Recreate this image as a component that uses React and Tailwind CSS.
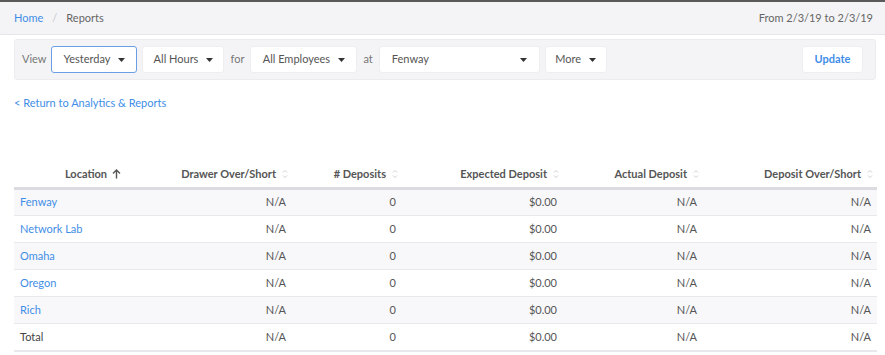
import React from 'react';

const rows = [
  { name: 'Fenway', link: true },
  { name: 'Network Lab', link: true },
  { name: 'Omaha', link: true },
  { name: 'Oregon', link: true },
  { name: 'Rich', link: true },
  { name: 'Total', link: false },
];

const Caret = () => (
  <svg width="7" height="4" viewBox="0 0 7 4" className="ml-2 shrink-0">
    <path d="M0 0h7L3.5 4z" fill="#333" />
  </svg>
);

const SortBoth = () => (
  <svg width="6" height="10" viewBox="0 0 6 10" className="ml-[6px] shrink-0">
    <path d="M1 3.5L3 1.5l2 2M1 6.5l2 2 2-2" stroke="#cfd0d4" strokeWidth="1" fill="none" />
  </svg>
);

const SortUp = () => (
  <svg width="9" height="10" viewBox="0 0 9 10" className="ml-[5px] shrink-0">
    <path d="M4.5 9.5V1M1 4.5l3.5-3.5 3.5 3.5" stroke="#555" strokeWidth="1.4" fill="none" />
  </svg>
);

const Select = ({ label, width, active, between }) => (
  <button
    className={`h-[27px] shrink-0 whitespace-nowrap flex items-center ${between ? 'justify-between' : 'justify-center'} bg-white rounded-[3px] px-3 text-[11px] text-[#555] border ${active ? 'border-[#6a9fe6]' : 'border-[#eeeef0]'}`}
    style={{ width }}
  >
    <span>{label}</span>
    <Caret />
  </button>
);

export default function App() {
  return (
    <div className="w-[885px] h-[355px] bg-white overflow-hidden font-['Lato','Open_Sans',sans-serif] text-[#555]">
      <div className="h-[2px] bg-[#5a5a5a]" />
      <div className="h-[33px] bg-[#f4f4f6] border-b border-[#e6e6ea] flex items-center justify-between px-[14px] text-[11px]">
        <div className="flex items-center">
          <span className="text-[#3f8ee6]">Home</span>
          <span className="mx-[9px] text-[#c8c8cc]">/</span>
          <span className="text-[#666]">Reports</span>
        </div>
        <span className="text-[#666] mr-[-2px]">From 2/3/19 to 2/3/19</span>
      </div>

      <div className="mx-[14px] mt-[4px] w-[862px] h-[41px] bg-[#f4f4f6] rounded-[3px] border border-[#ececf0] flex items-center pl-[7px] pr-[12px] text-[11px] whitespace-nowrap">
        <span className="text-[#777] mr-[5px]">View</span>
        <Select label="Yesterday" width={86} active />
        <div className="w-[5px] shrink-0" />
        <Select label="All Hours" width={82} />
        <span className="text-[#777] mx-[6px]">for</span>
        <Select label="All Employees" width={107} />
        <span className="text-[#777] mx-[6px]">at</span>
        <Select label="Fenway" width={161} between />
        <div className="w-[5px] shrink-0" />
        <Select label="More" width={62} />
        <div className="flex-1" />
        <button className="h-[27px] w-[61px] shrink-0 bg-white rounded-[3px] border border-[#eeeef0] text-[11px] font-bold text-[#3f8ee6]">
          Update
        </button>
      </div>

      <div className="mx-[14px] mt-[15px] text-[11px] text-[#3f8ee6]">&lt; Return to Analytics &amp; Reports</div>

      <table className="ml-[14px] mt-[50px] w-[863px] border-collapse text-[11px]">
        <thead>
          <tr className="h-[27px] border-b-[3px] border-[#dcdce0] font-bold text-[#555]">
            <th className="w-[158px] font-bold">
              <div className="flex items-center justify-center">Location<SortUp /></div>
            </th>
            {[
              ['Drawer Over/Short', 120],
              ['# Deposits', 110],
              ['Expected Deposit', 161],
              ['Actual Deposit', 140],
              ['Deposit Over/Short', 174],
            ].map(([h, w]) => (
              <th key={h} className="font-bold pr-[4px]" style={{ width: w }}>
                <div className="flex items-center justify-end">{h}<SortBoth /></div>
              </th>
            ))}
          </tr>
        </thead>
        <tbody>
          {rows.map((r, i) => (
            <tr key={r.name} className={`h-[27px] border-b border-[#e8e8ec] ${i % 2 === 0 ? 'bg-[#f8f8fa]' : 'bg-white'} ${i === rows.length - 1 ? 'border-b-[2px]' : ''}`}>
              <td className={`pl-[6px] ${r.link ? 'text-[#3f8ee6]' : 'text-[#444]'}`}>{r.name}</td>
              <td className="text-right pr-[6px]">N/A</td>
              <td className="text-right pr-[6px]">0</td>
              <td className="text-right pr-[6px]">$0.00</td>
              <td className="text-right pr-[6px]">N/A</td>
              <td className="text-right pr-[6px]">N/A</td>
            </tr>
          ))}
        </tbody>
      </table>
    </div>
  );
}
